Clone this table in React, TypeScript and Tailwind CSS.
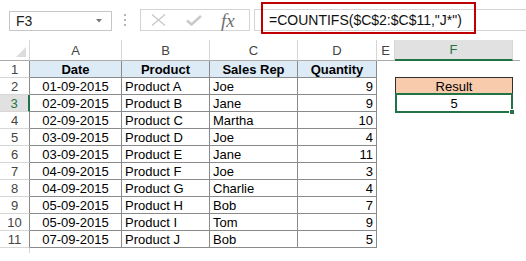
import React from "react";

const dates = ["01-09-2015","02-09-2015","02-09-2015","03-09-2015","03-09-2015","04-09-2015","04-09-2015","05-09-2015","05-09-2015","07-09-2015"];
const products = ["Product A","Product B","Product C","Product D","Product E","Product F","Product G","Product H","Product I","Product J"];
const reps = ["Joe","Jane","Martha","Joe","Jane","Joe","Charlie","Bob","Tom","Bob"];
const qty = [9,9,10,4,11,3,4,7,9,5];

const font = { fontFamily: '"Liberation Sans", Arial, sans-serif' } as const;

function FormulaBar() {
  return (
    <div className="relative flex h-[40px] items-start pt-[11px]">
      <div className="ml-[9px] flex h-[20px] w-[103px] items-center justify-between border border-[#c6c6c6] pl-[6px] pr-[9px] text-[14px] text-[#222]">
        <span>F3</span>
        <svg width="6" height="4" viewBox="0 0 6 4"><path d="M0 0H6L3 3.5Z" fill="#777" /></svg>
      </div>
      <div className="ml-[12px] mt-[3px] flex h-[12px] flex-col justify-between">
        <div className="h-[2px] w-[2px] bg-[#b5b5b5]" />
        <div className="h-[2px] w-[2px] bg-[#b5b5b5]" />
        <div className="h-[2px] w-[2px] bg-[#b5b5b5]" />
      </div>
      <div className="-mt-[2px] ml-[14px] flex h-[22px] w-[110px] items-center border border-[#d4d4d4]">
        <svg className="ml-[10px]" width="15" height="12" viewBox="0 0 15 12">
          <path d="M1 0.5L14 11.5M14 0.5L1 11.5" stroke="#c8c8c8" strokeWidth="1.3" fill="none" />
        </svg>
        <svg className="ml-[20px]" width="16" height="11" viewBox="0 0 16 11">
          <path d="M1 5.5L5.5 9.5L15 1" stroke="#cacaca" strokeWidth="2.6" fill="none" />
        </svg>
        <span className="ml-[19px] text-[19px] italic leading-none text-[#6f6f6f]" style={{ fontFamily: '"Liberation Serif", "Times New Roman", serif' }}>fx</span>
      </div>
      <div className="-mt-[2px] ml-[4px] flex h-[22px] flex-1 items-center border border-r-0 border-[#d4d4d4] pl-[14px] text-[14px] text-[#111]">
        =COUNTIFS($C$2:$C$11,"J*")
      </div>
      <div className="absolute left-[261px] top-[2px] h-[32px] w-[215px] border-2 border-[#c00000]" />
    </div>
  );
}

const tableBorder = "border-[#8a8a8a]";
const light = "border-[#d6d6d6]";

function Sheet() {
  const cols = ["A", "B", "C", "D", "E", "F"];
  return (
    <div className="grid grid-cols-[30px_92px_88px_88px_79px_18px_118px_7px] text-[13px] leading-[17px]">
      {/* header row */}
      <div className={`relative h-[21px] border-r border-b ${light} border-b-[#ababab]`}>
        <svg className="absolute right-[3px] bottom-[3px]" width="10" height="10" viewBox="0 0 10 10">
          <path d="M10 0V10H0Z" fill="#dcdcdc" />
        </svg>
      </div>
      {cols.map((c) =>
        c === "F" ? (
          <div key={c} className={`flex h-[21px] items-center justify-center border-r ${light} border-b-2 border-b-[#217346] bg-[#e1e1e1] text-[#217346]`}>{c}</div>
        ) : (
          <div key={c} className={`flex h-[21px] items-center justify-center border-r ${light} border-b border-b-[#ababab] text-[#444]`}>{c}</div>
        )
      )}
      <div className="h-[21px] border-b border-b-[#ababab]" />

      {/* row 1 */}
      {Array.from({ length: 11 }).map((_, i) => {
        const r = i + 1;
        const sel = r === 3;
        const rowHead = sel ? (
          <div key={`h${r}`} className={`flex h-[17px] items-center justify-center border-r-2 border-r-[#217346] border-b ${light} bg-[#e1e1e1] text-[#217346]`}>{r}</div>
        ) : (
          <div key={`h${r}`} className={`flex h-[17px] items-center justify-center border-r ${tableBorder} border-b border-b-[#d6d6d6] text-[#444]`}>{r}</div>
        );
        let cells: React.ReactNode[];
        if (r === 1) {
          cells = ["Date", "Product", "Sales Rep", "Quantity"].map((t) => (
            <div key={t} className={`h-[17px] border-r border-b ${tableBorder} bg-[#ddebf7] text-center font-bold text-black`}>{t}</div>
          ));
        } else {
          const k = r - 2;
          cells = [
            <div key="a" className={`h-[17px] border-r border-b ${tableBorder} text-center text-black`}>{dates[k]}</div>,
            <div key="b" className={`h-[17px] border-r border-b ${tableBorder} pl-[3px] text-black`}>{products[k]}</div>,
            <div key="c" className={`h-[17px] border-r border-b ${tableBorder} pl-[3px] text-black`}>{reps[k]}</div>,
            <div key="d" className={`h-[17px] border-r border-b ${tableBorder} pr-[3px] text-right text-black`}>{qty[k]}</div>,
          ];
        }
        let f: React.ReactNode;
        if (r === 1) f = <div key="f" className="h-[17px] border-b border-[#303030]" />;
        else if (r === 2)
          f = <div key="f" className="h-[17px] border-x border-b border-[#303030] bg-[#f8cbad] text-center text-black">Result</div>;
        else if (r === 3)
          f = (
            <div key="f" className="relative h-[17px] text-center text-black">
              5
              <div className="absolute -top-[2px] -bottom-[1px] left-0 right-0 border-2 border-[#217346]" />
              <div className="absolute -right-[2px] -bottom-[3px] h-[6px] w-[6px] border border-white bg-[#217346]" />
            </div>
          );
        else f = <div key="f" className="h-[17px]" />;
        return (
          <React.Fragment key={r}>
            {rowHead}
            {cells}
            <div className="h-[17px]" />
            {f}
            <div className="h-[17px]" />
          </React.Fragment>
        );
      })}
      <div className={`h-[5px] border-r ${light}`} />
    </div>
  );
}

export default function App() {
  return (
    <div className="h-[261px] w-[526px] overflow-hidden bg-white" style={font}>
      <FormulaBar />
      <Sheet />
    </div>
  );
}
